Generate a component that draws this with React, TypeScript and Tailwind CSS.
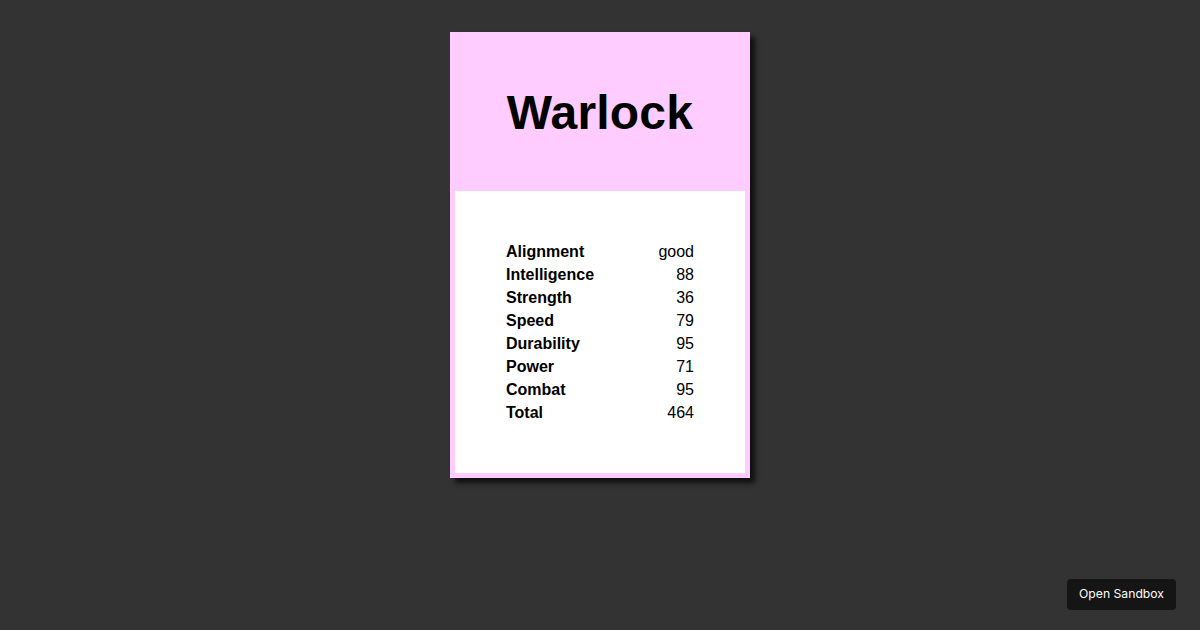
const stats: [string, string][] = [
  ["Alignment", "good"],
  ["Intelligence", "88"],
  ["Strength", "36"],
  ["Speed", "79"],
  ["Durability", "95"],
  ["Power", "71"],
  ["Combat", "95"],
  ["Total", "464"],
];

export default function App() {
  return (
    <div className="relative w-full h-[630px] bg-[#333333] font-['Liberation_Sans',Arial,sans-serif] text-black">
      <div className="flex justify-center pt-8">
        {/* Hero card */}
        <div className="w-[300px] bg-[#ffccff] shadow-[5px_5px_5px_rgba(0,0,0,0.7)]">
          <div className="h-[159px] flex items-center justify-center pt-[2px]">
            <h1 className="text-[48px] font-bold leading-none tracking-[0.2px]">Warlock</h1>
          </div>
          <div className="mx-[5px] mb-[5px] h-[282px] bg-white flex justify-center pt-[49px]">
            <div className="w-[188px]">
              {stats.map(([label, value]) => (
                <div key={label} className="flex justify-between h-[23px] items-center text-[16px]">
                  <span className="font-bold">{label}</span>
                  <span>{value}</span>
                </div>
              ))}
            </div>
          </div>
        </div>
      </div>

      <button className="absolute right-6 bottom-5 h-[31px] px-3 rounded bg-[#151515] text-white text-[12.2px] font-['Inter',sans-serif]">
        Open Sandbox
      </button>
    </div>
  );
}
